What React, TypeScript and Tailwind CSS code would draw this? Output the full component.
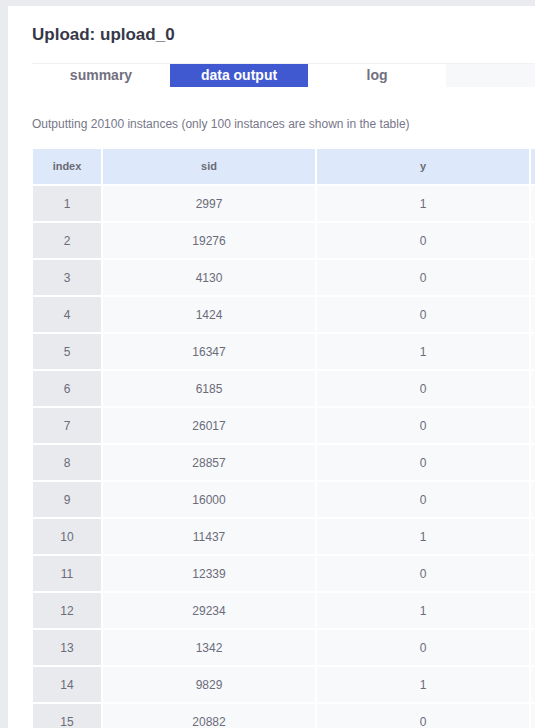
const rows: [number, number, number][] = [
  [1, 2997, 1],
  [2, 19276, 0],
  [3, 4130, 0],
  [4, 1424, 0],
  [5, 16347, 1],
  [6, 6185, 0],
  [7, 26017, 0],
  [8, 28857, 0],
  [9, 16000, 0],
  [10, 11437, 1],
  [11, 12339, 0],
  [12, 29234, 1],
  [13, 1342, 0],
  [14, 9829, 1],
  [15, 20882, 0],
  [16, 5120, 0],
];

const tabs = ["summary", "data output", "log"];

export default function App() {
  return (
    <div
      className="h-screen overflow-hidden bg-[#eaebef] pt-[6px] pl-2"
      style={{ fontFamily: '"Liberation Sans", Arial, sans-serif' }}
    >
      <div className="w-[760px] min-h-full bg-white pl-6 pt-[19px]">
        <h1 className="text-[17px] leading-5 font-bold text-[#363849]">Upload: upload_0</h1>

        <div className="mt-[18px] flex border-t border-[#f1f2f4]">
          {tabs.map((t) => (
            <div
              key={t}
              className={
                t === "data output"
                  ? "w-[138px] h-[23px] flex items-center justify-center text-[14px] font-bold bg-[#4059d1] text-white"
                  : "w-[138px] h-[23px] flex items-center justify-center text-[14px] font-bold text-[#727080]"
              }
            >
              {t}
            </div>
          ))}
          <div className="flex-1 h-[23px] bg-[#f7f8fa]" />
        </div>

        <p className="mt-[29px] text-[12px] leading-4 text-[#77778a]">
          Outputting 20100 instances (only 100 instances are shown in the table)
        </p>

        <div className="mt-[17px] ml-[1px] grid grid-cols-[68px_212px_212px_200px] gap-[2px] text-[12px]">
          <div className="h-[35px] flex items-center justify-center bg-[#dde9fa] text-[11px] font-bold text-[#6b6b74]">
            index
          </div>
          <div className="h-[35px] flex items-center justify-center bg-[#dde9fa] text-[11px] font-bold text-[#6b6b74]">
            sid
          </div>
          <div className="h-[35px] flex items-center justify-center bg-[#dde9fa] text-[11px] font-bold text-[#6b6b74]">
            y
          </div>
          <div className="h-[35px] bg-[#dde9fa]" />
          {rows.map(([i, sid, y]) => (
            <div key={i} className="contents">
              <div className="h-[35px] flex items-center justify-center bg-[#e9eaee] text-[#6b6b7a]">{i}</div>
              <div className="h-[35px] flex items-center justify-center bg-[#f8f9fb] text-[#6b6b7a]">{sid}</div>
              <div className="h-[35px] flex items-center justify-center bg-[#f8f9fb] text-[#6b6b7a]">{y}</div>
              <div className="h-[35px] bg-[#f8f9fb]" />
            </div>
          ))}
        </div>
      </div>
    </div>
  );
}
